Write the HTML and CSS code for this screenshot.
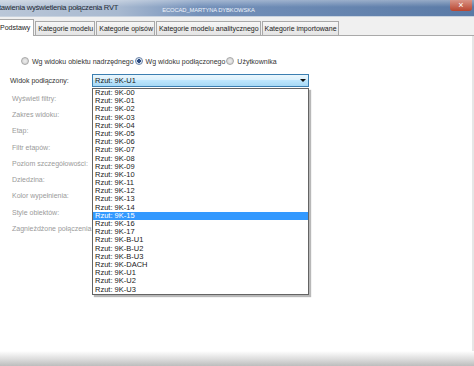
FILE: index.html
```html
<!DOCTYPE html>
<html lang="pl">
<head>
<meta charset="utf-8">
<link rel="stylesheet" href="styles.css">
</head>
<body>
<div class="window">
  <div class="titlebar">
    <span class="title">tawienia wyświetlenia połączenia RVT</span>
    <span class="user">ECOCAD_MARTYNA DYBKOWSKA</span>
    <span class="close">×</span>
  </div>
  <div class="tabs">
    <span class="tab active">Podstawy</span>
    <span class="tab">Kategorie modelu</span>
    <span class="tab">Kategorie opisów</span>
    <span class="tab">Kategorie modelu analitycznego</span>
    <span class="tab">Kategorie importowane</span>
  </div>
  <div class="content">
    <div class="radios">
      <label class="radio"><span class="dot"></span>Wg widoku obiektu nadrzędnego</label>
      <label class="radio"><span class="dot on"></span>Wg widoku podłączonego</label>
      <label class="radio"><span class="dot"></span>Użytkownika</label>
    </div>
    <div class="form">
      <div class="row first">
        <span class="label dark">Widok podłączony:</span>
        <div class="combo-wrap">
          <div class="combo"><span>Rzut: 9K-U1</span><span class="arrow"></span></div>
          <ul class="list">
            <li>Rzut: 9K-00</li><li>Rzut: 9K-01</li><li>Rzut: 9K-02</li><li>Rzut: 9K-03</li>
            <li>Rzut: 9K-04</li><li>Rzut: 9K-05</li><li>Rzut: 9K-06</li><li>Rzut: 9K-07</li>
            <li>Rzut: 9K-08</li><li>Rzut: 9K-09</li><li>Rzut: 9K-10</li><li>Rzut: 9K-11</li>
            <li>Rzut: 9K-12</li><li>Rzut: 9K-13</li><li>Rzut: 9K-14</li><li class="sel">Rzut: 9K-15</li>
            <li>Rzut: 9K-16</li><li>Rzut: 9K-17</li><li>Rzut: 9K-B-U1</li><li>Rzut: 9K-B-U2</li>
            <li>Rzut: 9K-B-U3</li><li>Rzut: 9K-DACH</li><li>Rzut: 9K-U1</li><li>Rzut: 9K-U2</li>
            <li>Rzut: 9K-U3</li>
          </ul>
        </div>
      </div>
      <div class="row"><span class="label">Wyświetl filtry:</span></div>
      <div class="row"><span class="label">Zakres widoku:</span></div>
      <div class="row"><span class="label">Etap:</span></div>
      <div class="row"><span class="label">Filtr etapów:</span></div>
      <div class="row"><span class="label">Poziom szczegółowości:</span></div>
      <div class="row"><span class="label">Dziedzina:</span></div>
      <div class="row"><span class="label">Kolor wypełnienia:</span></div>
      <div class="row"><span class="label">Style obiektów:</span></div>
      <div class="row"><span class="label">Zagnieżdżone połączenia:</span></div>
    </div>
  </div>
  <div class="footer"></div>
</div>
</body>
</html>
```

FILE: styles.css
```css
html, body {
  margin: 0;
  padding: 0;
  width: 474px;
  height: 366px;
  overflow: hidden;
  background: #fff;
}
.window {
  width: 474px;
  height: 366px;
  display: flex;
  flex-direction: column;
  font-family: "Liberation Sans", Arial, sans-serif;
  font-size: 7px;
  color: #333;
}
.titlebar {
  height: 17px;
  flex: none;
  display: flex;
  align-items: center;
  position: relative;
  background: linear-gradient(90deg, #bac7d8 0%, #a8b9d0 25%, #7491ba 42%, #5a7aa6 100%);
  border-bottom: 1px solid #c9d3df;
  box-sizing: border-box;
}
.titlebar::after {
  content: "";
  position: absolute;
  left: 0; right: 0; top: 0; height: 7px;
  background: linear-gradient(180deg, rgba(255,255,255,0.35), rgba(255,255,255,0));
}
.title {
  font-size: 7.6px;
  letter-spacing: -0.25px;
  color: #1c2733;
  margin-left: -1px;
  margin-top: -2px;
}
.user {
  font-size: 5.8px;
  color: #eef3fa;
  margin-left: 44px;
  margin-top: 4px;
  letter-spacing: -0.1px;
}
.close {
  position: absolute;
  right: 2px;
  top: 0;
  width: 22px;
  height: 11px;
  background: linear-gradient(180deg, #d99486, #b8452f);
  border-radius: 0 0 3px 3px;
  color: #fff;
  font-size: 9px;
  line-height: 10px;
  text-align: center;
  z-index: 1;
}
.tabs {
  height: 19px;
  flex: none;
  display: flex;
  align-items: flex-end;
  background: #f0f0f0;
  border-bottom: 1px solid #a9a9a9;
  box-sizing: border-box;
}
.tab {
  height: 14px;
  line-height: 13px;
  padding: 0 1px 0 2px;
  border: 1px solid #a9a9a9;
  border-bottom: none;
  margin-right: 1px;
  background: linear-gradient(180deg, #f6f6f6, #e4e4e4);
  color: #222;
  box-sizing: border-box;
  white-space: nowrap;
}
.tab.active {
  height: 17px;
  line-height: 15px;
  background: #fff;
  margin-bottom: -1px;
  padding-left: 0;
  padding-right: 3px;
  border-left: none;
}
.content {
  flex: 1;
  position: relative;
  background: #fff;
  border-right: 2px solid #e6e6e6;
}
.radios {
  display: flex;
  align-items: center;
  padding: 20px 0 0 21px;
  height: 10px;
}
.radio {
  display: flex;
  align-items: center;
  color: #333;
  margin-right: 1px;
}
.dot {
  width: 6px;
  height: 6px;
  border: 1px solid #a8a8a8;
  border-radius: 50%;
  background: radial-gradient(circle, #eee, #ccc);
  margin-right: 3px;
}
.dot.on {
  background: radial-gradient(circle, #2a4b82 0 40%, #d8e3f0 45%);
  border-color: #6f86a8;
}
.form {
  padding: 8px 0 0 10px;
  display: flex;
  flex-direction: column;
}
.row {
  height: 16.3px;
  display: flex;
  align-items: center;
}
.row.first {
  height: 13px;
  margin-bottom: 3px;
}
.label {
  color: #9a9a9a;
  width: 82px;
  padding-left: 2px;
  white-space: nowrap;
}
.label.dark {
  color: #333;
  padding-left: 0;
}
.combo-wrap {
  position: relative;
  width: 217px;
}
.combo {
  height: 13px;
  border: 1px solid #3c7fb1;
  background: linear-gradient(180deg, #eaf6fd 0%, #d9f0fc 45%, #bee6fd 50%, #a7d9f5 100%);
  display: flex;
  align-items: center;
  justify-content: space-between;
  padding-left: 2px;
  box-sizing: border-box;
  color: #1a1a1a;
  font-size: 7.5px;
}
.arrow {
  width: 0;
  height: 0;
  border-left: 3px solid transparent;
  border-right: 3px solid transparent;
  border-top: 3px solid #111;
  margin-right: 2px;
}
.list {
  position: absolute;
  left: 0;
  top: 14px;
  width: 217px;
  margin: 0;
  padding: 0;
  list-style: none;
  background: #fff;
  border: 1px solid #646464;
  box-shadow: 2px 2px 1px rgba(0,0,0,0.28);
  box-sizing: border-box;
  z-index: 2;
  font-size: 7.5px;
}
.list li {
  height: 8.2px;
  line-height: 8.2px;
  padding-left: 2px;
  color: #1a1a1a;
  white-space: nowrap;
}
.list li.sel {
  background: #3399ff;
  color: #fff;
}
.footer {
  height: 15px;
  flex: none;
  background: linear-gradient(180deg, #ffffff 0%, #dcdcdc 55%, #bdbdbd 100%);
}
```
